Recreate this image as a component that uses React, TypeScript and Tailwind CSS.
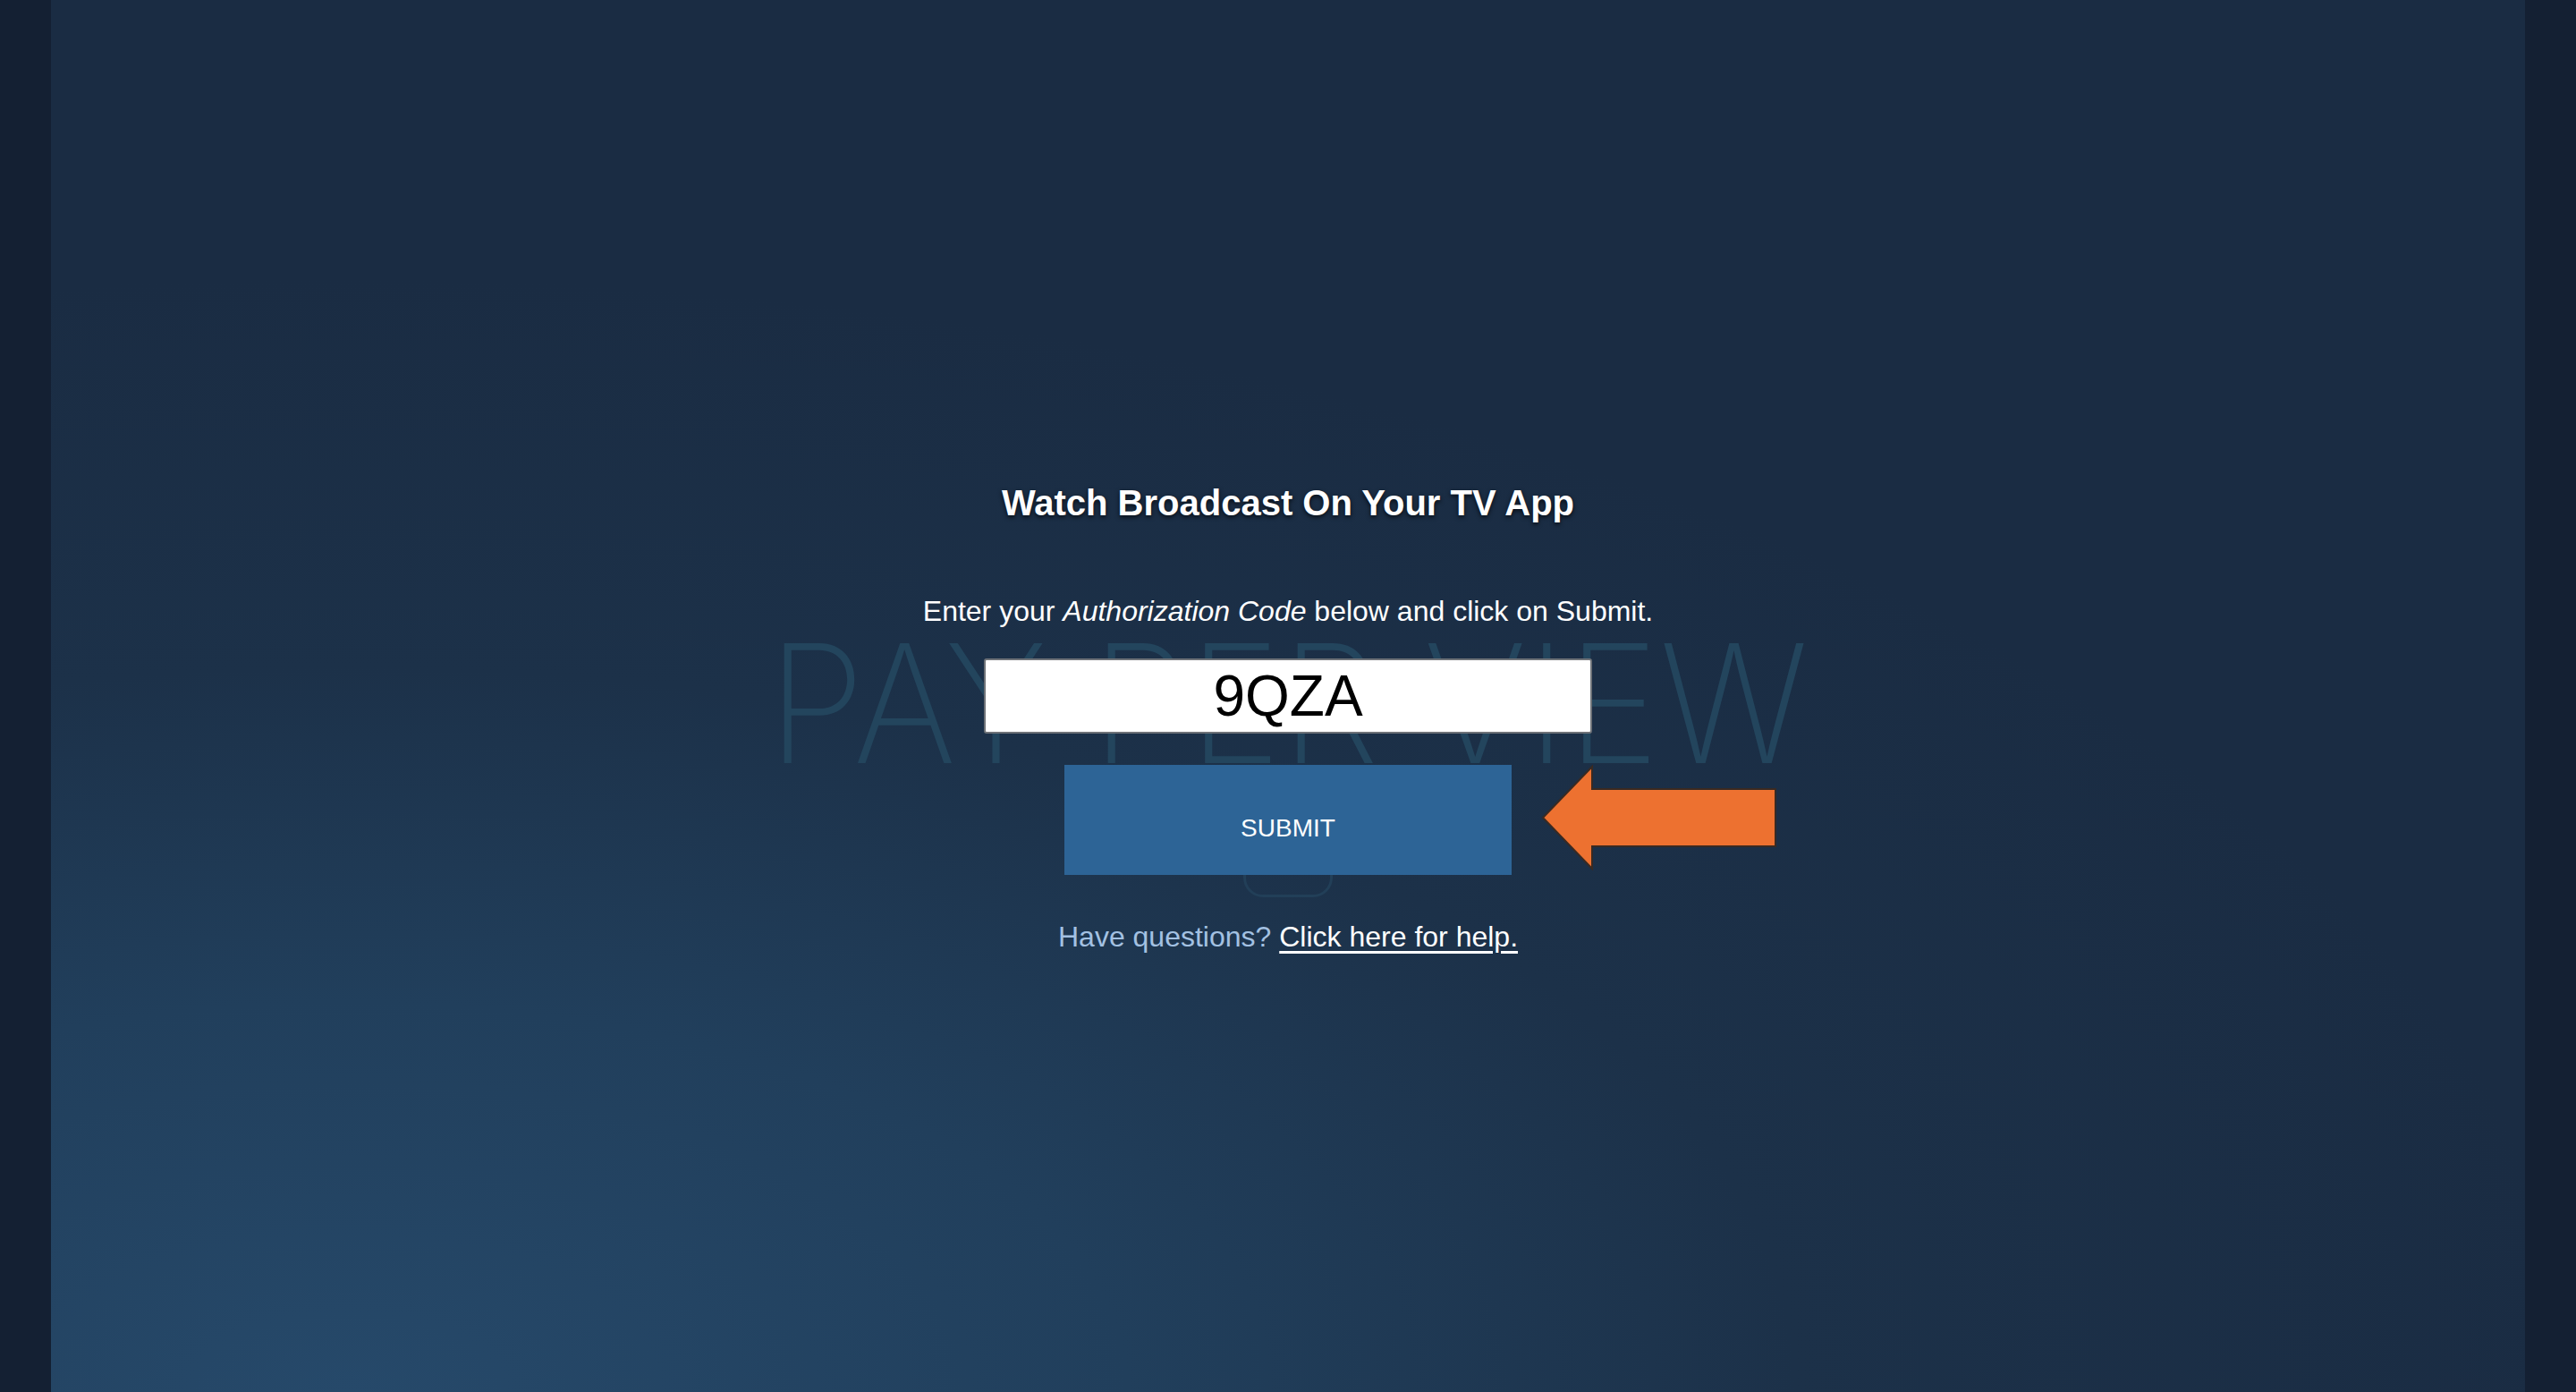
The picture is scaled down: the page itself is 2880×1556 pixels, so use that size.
import React from "react";

function Arrow() {
  return (
    <svg width="264" height="118" viewBox="0 0 264 118" className="block">
      <polygon
        points="2,59 57,2 57,27 262,27 262,91 57,91 57,116"
        fill="#ed7130"
        stroke="#3a2a22"
        strokeWidth="2"
        strokeLinejoin="miter"
      />
    </svg>
  );
}

export default function App() {
  return (
    <div className="flex h-screen w-full bg-[#142033] font-['Liberation_Sans',Arial,sans-serif]">
      <div className="w-[57px] shrink-0 bg-[#142033]" />
      <main className="relative flex-1 overflow-hidden bg-[radial-gradient(ellipse_90%_80%_at_12%_100%,#26496a_0%,#213f5c_35%,#1c3149_65%,#1a2c43_100%)]">
        {/* watermark */}
        <div aria-hidden="true" className="pointer-events-none absolute left-1/2 top-[694px] -translate-x-1/2 select-none">
          <div className="origin-center scale-x-[0.955] whitespace-nowrap font-['Inter',sans-serif] text-[184px] font-extralight leading-[184px] text-[#23455d]">
            PAY PER VIEW
          </div>
        </div>
        <div className="pointer-events-none absolute left-1/2 top-[905px] h-[98px] w-[100px] -translate-x-1/2 rounded-[22px] border-[3px] border-[#223f58]" />

        <div className="relative flex flex-col items-center pt-[538px]">
          <h1 className="text-[40px] font-bold leading-[48px] text-white [text-shadow:0_2px_5px_rgba(0,0,0,0.75)]">
            Watch Broadcast On Your TV App
          </h1>
          <p className="mt-[77px] text-[32px] leading-[40px] text-white">
            Enter your <em className="italic">Authorization Code</em> below and click on Submit.
          </p>
          <div className="mt-[33px] flex h-[84px] w-[680px] items-center justify-center rounded-[3px] border-2 border-[#6f7378] bg-white">
            <span className="text-[64px] leading-none text-black">9QZA</span>
          </div>
          <div className="relative mt-[35px]">
            <button className="flex h-[123px] w-[500px] items-center justify-center bg-[#2d6496] pt-[18px] text-[28px] text-white">
              SUBMIT
            </button>
            <div className="absolute left-[calc(100%+33px)] top-0">
              <Arrow />
            </div>
          </div>
          <p className="mt-[49px] text-[32px] leading-[40px] text-[#a3c1e2]">
            Have questions?{" "}
            <a href="#" className="text-white underline underline-offset-[5px]">
              Click here for help.
            </a>
          </p>
        </div>
      </main>
      <div className="w-[57px] shrink-0 bg-[#142033]" />
    </div>
  );
}
